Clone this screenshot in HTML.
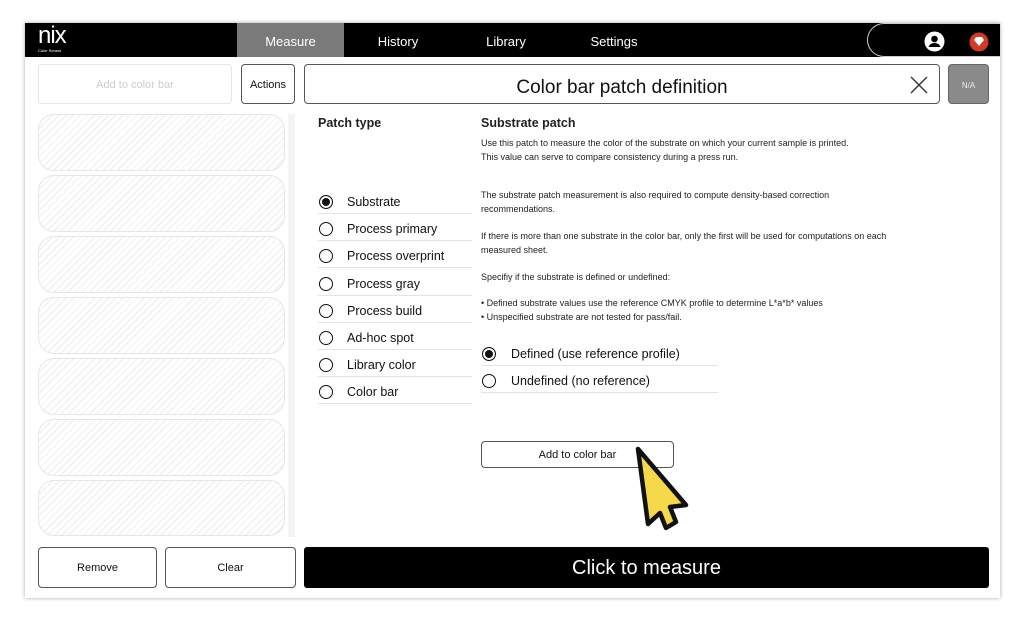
<!DOCTYPE html>
<html><head><style>
*{box-sizing:border-box;margin:0;padding:0}
body{width:1024px;height:625px;background:#fff;font-family:"Liberation Sans",sans-serif;position:relative;overflow:hidden;color:#111}
.abs{position:absolute}
.frame{left:25px;top:23px;width:975px;height:575px;box-shadow:0 0 4px rgba(0,0,0,.35);background:#fff}
.nav{left:25px;top:23px;width:975px;height:34px;background:#000}
.tab{top:23px;height:34px;color:#fff;font-size:13px;line-height:38px;text-align:center}
.item{left:38px;width:247px;height:57px;border:1px solid #e6e6e6;border-radius:16px;background:repeating-linear-gradient(135deg,#fff 0 4px,#ececec 4px 5px)}
.radio{width:14px;height:14px;border:1.6px solid #111;border-radius:50%}
.rl{font-size:12.5px;color:#111}
.ul{height:1px;background:#e4e4e4}
.p{font-size:9px;color:#222;line-height:14px;left:481px}
.btn{border:1px solid #555;border-radius:4px;font-size:11px;text-align:center;background:#fff}
</style></head><body>
<div class="abs frame"></div>
<div class="abs nav"></div>
<div class="abs" style="left:38px;top:25px;color:#fff;font-size:24px;line-height:22px;letter-spacing:-1px">nix</div>
<div class="abs" style="left:38px;top:48px;color:#fff;font-size:4px">Color Sensor</div>
<div class="abs tab" style="left:237px;width:107px;background:#7a7a7a">Measure</div>
<div class="abs tab" style="left:358px;width:80px">History</div>
<div class="abs tab" style="left:466px;width:80px">Library</div>
<div class="abs tab" style="left:574px;width:80px">Settings</div>
<div class="abs" style="left:867px;top:23px;width:133px;height:34px;border:1px solid #ccc;border-right:none;border-radius:17px 0 0 17px;background:#000"></div>
<svg class="abs" style="left:924px;top:31px" width="21" height="21" viewBox="0 0 21 21"><circle cx="10.5" cy="10.5" r="10" fill="#fff"/><circle cx="10.5" cy="8" r="3.3" fill="#000"/><path d="M4.5 16c1-3 3.5-4 6-4s5 1 6 4z" fill="#000"/></svg>
<svg class="abs" style="left:969px;top:32px" width="20" height="20" viewBox="0 0 20 20"><circle cx="10" cy="10" r="9.5" fill="#d13a26"/><path d="M5 8l2-3h6l2 3-5 6z" fill="#fff"/></svg>

<div class="abs btn" style="left:38px;top:64px;width:194px;height:40px;border-color:#e6e6e6;color:#ccc;line-height:40px">Add to color bar</div>
<div class="abs btn" style="left:241px;top:64px;width:54px;height:40px;line-height:40px;font-size:11px">Actions</div>
<div class="abs btn" style="left:304px;top:64px;width:636px;height:40px;line-height:46px;font-size:19px;color:#111">Color bar patch definition</div>
<svg class="abs" style="left:910px;top:76px" width="18" height="18"><path d="M1 1L17 17M17 1L1 17" stroke="#333" stroke-width="1.4"/></svg>
<div class="abs" style="left:948px;top:64px;width:41px;height:40px;background:#8a8a8a;border:1px solid #666;border-radius:4px;color:#eee;font-size:8px;line-height:42px;text-align:center">N/A</div>

<div class="abs item" style="top:114px"></div>
<div class="abs item" style="top:175px"></div>
<div class="abs item" style="top:236px"></div>
<div class="abs item" style="top:297px"></div>
<div class="abs item" style="top:358px"></div>
<div class="abs item" style="top:419px"></div>
<div class="abs item" style="top:480px;height:56px"></div>
<div class="abs" style="left:288px;top:114px;width:7px;height:423px;background:#f3f3f3"></div>

<div class="abs" style="left:318px;top:116px;font-size:12.5px;font-weight:bold;color:#222">Patch type</div>
<div class="abs" style="left:481px;top:116px;font-size:12.5px;font-weight:bold;color:#222">Substrate patch</div>
<div class="abs p" style="top:136px">Use this patch to measure the color of the substrate on which your current sample is printed.<br>This value can serve to compare consistency during a press run.</div>
<div class="abs p" style="top:188px">The substrate patch measurement is also required to compute density-based correction<br>recommendations.</div>
<div class="abs p" style="top:229px">If there is more than one substrate in the color bar, only the first will be used for computations on each<br>measured sheet.</div>
<div class="abs p" style="top:270px">Specifiy if the substrate is defined or undefined:</div>
<div class="abs p" style="top:296px">• Defined substrate values use the reference CMYK profile to determine L*a*b* values<br>• Unspecified substrate are not tested for pass/fail.</div>

<div class="abs radio" style="left:319px;top:195px;background:#111;box-shadow:inset 0 0 0 2px #fff"></div><div class="abs rl" style="left:347px;top:195px">Substrate</div><div class="abs ul" style="left:318px;top:213px;width:154px"></div>
<div class="abs radio" style="left:319px;top:222px"></div><div class="abs rl" style="left:347px;top:222px">Process primary</div><div class="abs ul" style="left:318px;top:240px;width:154px"></div>
<div class="abs radio" style="left:319px;top:249px"></div><div class="abs rl" style="left:347px;top:249px">Process overprint</div><div class="abs ul" style="left:318px;top:267px;width:154px"></div>
<div class="abs radio" style="left:319px;top:277px"></div><div class="abs rl" style="left:347px;top:277px">Process gray</div><div class="abs ul" style="left:318px;top:295px;width:154px"></div>
<div class="abs radio" style="left:319px;top:304px"></div><div class="abs rl" style="left:347px;top:304px">Process build</div><div class="abs ul" style="left:318px;top:322px;width:154px"></div>
<div class="abs radio" style="left:319px;top:331px"></div><div class="abs rl" style="left:347px;top:331px">Ad-hoc spot</div><div class="abs ul" style="left:318px;top:349px;width:154px"></div>
<div class="abs radio" style="left:319px;top:358px"></div><div class="abs rl" style="left:347px;top:358px">Library color</div><div class="abs ul" style="left:318px;top:376px;width:154px"></div>
<div class="abs radio" style="left:319px;top:385px"></div><div class="abs rl" style="left:347px;top:385px">Color bar</div><div class="abs ul" style="left:318px;top:403px;width:154px"></div>

<div class="abs radio" style="left:482px;top:347px;background:#111;box-shadow:inset 0 0 0 2px #fff"></div><div class="abs rl" style="left:511px;top:347px">Defined (use reference profile)</div><div class="abs ul" style="left:481px;top:365px;width:237px"></div>
<div class="abs radio" style="left:482px;top:374px"></div><div class="abs rl" style="left:511px;top:374px">Undefined (no reference)</div><div class="abs ul" style="left:481px;top:392px;width:237px"></div>

<div class="abs btn" style="left:481px;top:441px;width:193px;height:27px;line-height:27px">Add to color bar</div>
<svg class="abs" style="left:630px;top:444px" width="62" height="90" viewBox="0 0 62 90"><path d="M8 5L56 61L40 63L46 78L36 84L30 69L18 80Z" fill="#f5d94a" stroke="#111" stroke-width="4.5" stroke-linejoin="round"/></svg>

<div class="abs btn" style="left:38px;top:547px;width:119px;height:41px;line-height:41px">Remove</div>
<div class="abs btn" style="left:165px;top:547px;width:131px;height:41px;line-height:41px">Clear</div>
<div class="abs" style="left:304px;top:547px;width:685px;height:41px;background:#000;border-radius:3px;color:#fff;font-size:20px;line-height:43px;text-align:center">Click to measure</div>
</body></html>
